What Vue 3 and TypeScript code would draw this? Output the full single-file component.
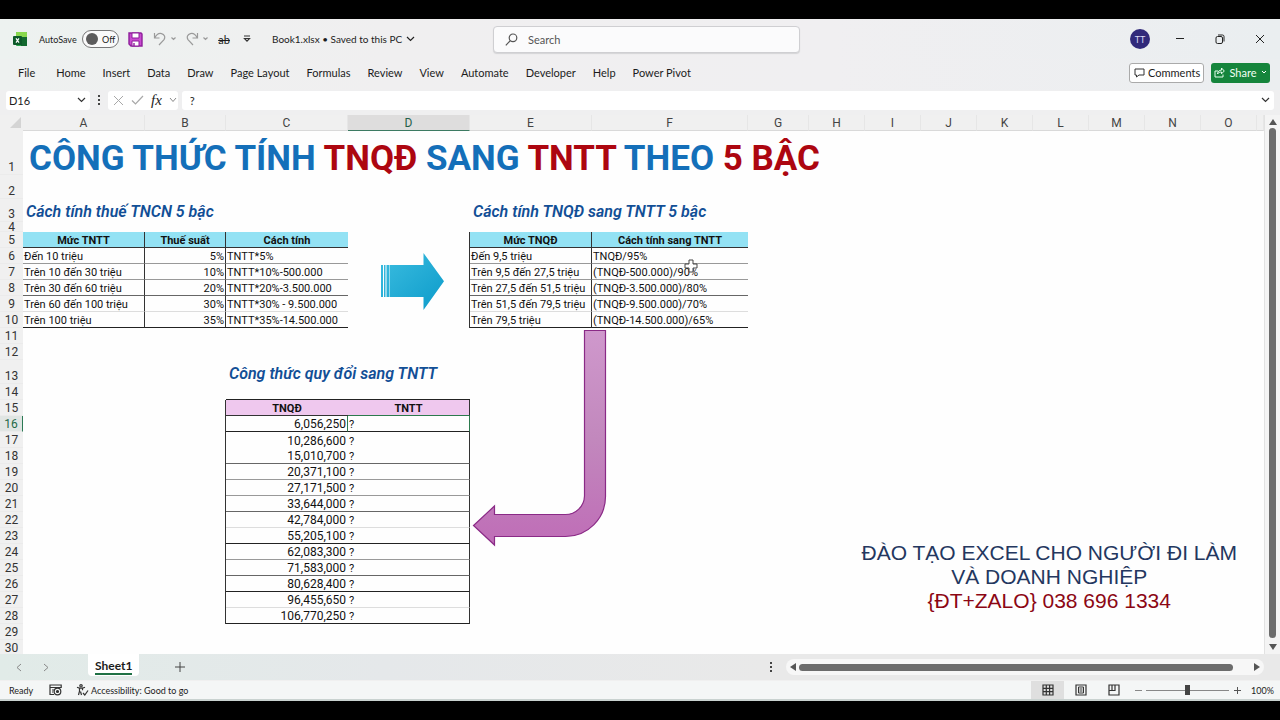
<script setup lang="ts">
import { ref } from 'vue'

interface Run { text: string; tone?: string }
interface Cell { runs: Run[]; cls: string }
interface Row { n: number; size: string; cells: Record<string, Cell> }

const columns = ['A', 'B', 'C', 'D', 'E', 'F', 'G', 'H', 'I', 'J', 'K', 'L', 'M', 'N', 'O']
const menus = ['File', 'Home', 'Insert', 'Data', 'Draw', 'Page Layout', 'Formulas', 'Review', 'View', 'Automate', 'Developer', 'Help', 'Power Pivot']

const cell = (text: string, cls: string): Cell => ({ runs: [{ text }], cls })

const sizes: Record<number, string> = { 1: 'banner', 2: 'tall', 3: 'heading', 4: 'slim', 12: 'short', 13: 'section' }
const rows: Row[] = Array.from({ length: 30 }, (_, i) => ({ n: i + 1, size: sizes[i + 1] ?? 'plain', cells: {} }))
const at = (n: number) => rows[n - 1].cells

at(1).A = {
  cls: 'title',
  runs: [
    { text: 'CÔNG THỨC TÍNH ' },
    { text: 'TNQĐ ', tone: 'red' },
    { text: 'SANG ' },
    { text: 'TNTT ', tone: 'red' },
    { text: 'THEO ' },
    { text: '5 BẬC', tone: 'red' },
  ],
}
at(3).A = cell('Cách tính thuế TNCN 5 bậc', 'sub')
at(3).E = cell('Cách tính TNQĐ sang TNTT 5 bậc', 'sub')
at(13).C = cell('Công thức quy đổi sang TNTT', 'sub')

at(5).A = cell('Mức TNTT', 'head cyan edge')
at(5).B = cell('Thuế suất', 'head cyan edge')
at(5).C = cell('Cách tính', 'head cyan')
at(5).D = cell('', 'edge')
at(5).E = cell('Mức TNQĐ', 'head cyan edge')
at(5).F = cell('Cách tính sang TNTT', 'head cyan')

const brackets = [
  ['Đến 10 triệu', '5%', 'TNTT*5%', 'Đến 9,5 triệu', 'TNQĐ/95%', 'mid'],
  ['Trên 10 đến 30 triệu', '10%', 'TNTT*10%-500.000', 'Trên 9,5 đến 27,5 triệu', '(TNQĐ-500.000)/90%', 'mid'],
  ['Trên 30 đến 60 triệu', '20%', 'TNTT*20%-3.500.000', 'Trên 27,5 đến 51,5 triệu', '(TNQĐ-3.500.000)/80%', 'deep'],
  ['Trên 60 đến 100 triệu', '30%', 'TNTT*30% - 9.500.000', 'Trên 51,5 đến 79,5 triệu', '(TNQĐ-9.500.000)/70%', 'soft'],
  ['Trên 100 triệu', '35%', 'TNTT*35%-14.500.000', 'Trên 79,5 triệu', '(TNQĐ-14.500.000)/65%', 'strong'],
]
brackets.forEach(([range, rate, formula, gross, back, line], i) => {
  const r = at(6 + i)
  r.A = cell(range, `edge ${line}`)
  r.B = cell(rate, `num edge ${line}`)
  r.C = cell(formula, line)
  r.D = cell('', 'edge')
  r.E = cell(gross, `edge ${line}`)
  r.F = cell(back, line)
})

at(14).C = cell('', 'strong')
at(14).D = cell('', 'strong')
at(15).B = cell('', 'edge')
at(15).C = cell('TNQĐ', 'head pink')
at(15).D = cell('TNTT', 'head pink edge above')

const amounts: [string, string][] = [
  ['6,056,250', 'strong'], ['10,286,600', ''], ['15,010,700', 'deep'], ['20,371,100', 'mid'],
  ['27,171,500', 'mid'], ['33,644,000', 'deep'], ['42,784,000', 'soft'], ['55,205,100', 'strong'],
  ['62,083,300', 'mid'], ['71,583,000', 'deep'], ['80,628,400', 'strong'], ['96,455,650', 'soft'],
  ['106,770,250', 'strong'],
]
amounts.forEach(([value, line], i) => {
  const r = at(16 + i)
  r.B = cell('', 'edge')
  r.C = cell(value, `num amount ${line}${i === 0 ? ' before' : ''}`)
  r.D = cell('?', `edge ${line}${i === 0 ? ' active' : ''}`)
})

const autosave = ref(false)
const address = ref('D16')
const formula = ref('?')
const query = ref('')
const zoom = ref(100)
</script>

<template>
  <div class="screen">
    <div class="app">
      <header class="titlebar">
        <div class="quick">
          <svg class="logo" width="14" height="14" viewBox="0 0 14 14" aria-hidden="true">
            <rect x="3" y="0" width="11" height="14" rx="1" fill="#2aa84a" />
            <path d="M4 0h9a1 1 0 0 1 1 1v4H3V1a1 1 0 0 1 1-1z" fill="#8ad94e" />
            <rect x="8" y="5" width="6" height="9" fill="#12692f" />
            <rect x="0" y="4" width="9" height="9" rx="1" fill="#0d5a2a" />
            <path d="M3 6.300l3 4.400M6 6.300l-3 4.400" stroke="#fff" stroke-width="1.200" />
          </svg>
          <label class="autosave">
            <span class="label">AutoSave</span>
            <span class="switch">
              <input v-model="autosave" type="checkbox" />
              <span class="knob"></span>
              <span class="state">Off</span>
            </span>
          </label>
          <button class="icon save" aria-label="Save">
            <svg width="15" height="15" viewBox="0 0 15 15">
              <path d="M1 1h12l1 1v12H3l-2-2z" fill="#c94bd0" stroke="#8e1f9b" stroke-width="1.400" />
              <path d="M4 1h7v5H4z" fill="#fff" stroke="#8e1f9b" />
              <path d="M4 14V9h7v5z" fill="#fff" stroke="#8e1f9b" />
              <path d="M6 11v3" stroke="#8e1f9b" stroke-width="1.400" />
            </svg>
          </button>
          <button class="icon undo" aria-label="Undo">
            <svg width="23" height="14" viewBox="0 0 23 14" fill="none" stroke="#9a9a9a" stroke-width="1.200">
              <path d="M1.500 1v5h5M1.800 5.800C3.500 2.500 6 1 8.500 1.600c3 .700 4.200 3.800 2.300 6.200L6 13" />
              <path d="M18.500 5.500l2 2 2-2" />
            </svg>
          </button>
          <button class="icon redo" aria-label="Redo">
            <svg width="23" height="14" viewBox="0 0 23 14" fill="none" stroke="#9a9a9a" stroke-width="1.200">
              <path d="M12.500 1v5h-5M12.200 5.800C10.500 2.500 8 1 5.500 1.600c-3 .700-4.200 3.800-2.300 6.200L8 13" />
              <path d="M18.500 5.500l2 2 2-2" />
            </svg>
          </button>
          <button class="icon strike" aria-label="Strikethrough"><s>ab</s></button>
          <button class="icon more" aria-label="Customize Quick Access Toolbar">
            <svg width="8" height="8" viewBox="0 0 8 8" fill="none" stroke="#333" stroke-width="1.200">
              <path d="M1 1h6M1.500 3.500h5L4 6.200z" />
            </svg>
          </button>
          <button class="book">
            <span>Book1.xlsx • Saved to this PC</span>
            <svg width="9" height="6" viewBox="0 0 9 6" fill="none" stroke="#222" stroke-width="1.200"><path d="M1 1l3.500 3.500L8 1" /></svg>
          </button>
        </div>
        <label class="search">
          <svg width="13" height="13" viewBox="0 0 13 13" fill="none" stroke="#555" stroke-width="1.200">
            <circle cx="8" cy="4.800" r="3.800" /><path d="M5.300 7.700L.8 12.300" />
          </svg>
          <input v-model="query" type="text" placeholder="Search" aria-label="Search" />
        </label>
        <div class="window">
          <button class="avatar" aria-label="Account">TT</button>
          <button class="icon wbtn" aria-label="Minimize">
            <svg width="10" height="10" viewBox="0 0 10 10" stroke="#222" fill="none"><path d="M1 4.500h8" /></svg>
          </button>
          <button class="icon wbtn" aria-label="Restore">
            <svg width="10" height="10" viewBox="0 0 10 10" stroke="#222" fill="none">
              <rect x="1" y="2.500" width="6.500" height="7" rx="1.500" /><path d="M3 1h4.500Q9 1 9 2.500V7.500" />
            </svg>
          </button>
          <button class="icon wbtn" aria-label="Close">
            <svg width="10" height="10" viewBox="0 0 10 10" stroke="#222" fill="none"><path d="M1 1l8 8M9 1L1 9" /></svg>
          </button>
        </div>
      </header>

      <nav class="menubar">
        <button v-for="m in menus" :key="m" class="menu">{{ m }}</button>
        <span class="spacer"></span>
        <button class="comments">
          <svg width="11" height="10" viewBox="0 0 11 10" fill="none" stroke="#333"><path d="M1 1h9v6H5L2.500 9V7H1z" /></svg>
          Comments
        </button>
        <button class="share">
          <svg width="11" height="11" viewBox="0 0 11 11" fill="none" stroke="#e8ffee">
            <path d="M4 4H1v6h8V7.500M3.500 7c.2-2.500 1.500-3.800 4-3.900V1l2.800 3-2.800 2.800V5C5.700 5 4.400 5.500 3.500 7z" />
          </svg>
          <span>Share</span>
          <svg width="6" height="5" viewBox="0 0 6 5" fill="none" stroke="#fff"><path d="M1 1l2 2 2-2" /></svg>
        </button>
      </nav>

      <div class="formulabar">
        <div class="namebox">
          <input v-model="address" type="text" aria-label="Name Box" />
          <button class="icon" aria-label="Open Name Box">
            <svg width="9" height="6" viewBox="0 0 9 6" fill="none" stroke="#333" stroke-width="1.200"><path d="M1 1l3.500 3.500L8 1" /></svg>
          </button>
        </div>
        <svg class="dots" width="2" height="10" viewBox="0 0 2 10" fill="#444"><path d="M0 0h2v2H0zM0 4h2v2H0zM0 8h2v2H0z" /></svg>
        <div class="fx">
          <button class="icon" aria-label="Cancel">
            <svg width="11" height="11" viewBox="0 0 11 11" fill="none" stroke="#a8a8a8"><path d="M1 1l9 9M10 1l-9 9" /></svg>
          </button>
          <button class="icon" aria-label="Enter">
            <svg width="13" height="10" viewBox="0 0 13 10" fill="none" stroke="#a8a8a8" stroke-width="1.200"><path d="M1 5.500L4.500 9 12 1" /></svg>
          </button>
          <button class="icon fxname" aria-label="Insert Function"><i>fx</i></button>
          <button class="icon" aria-label="Function list">
            <svg width="8" height="6" viewBox="0 0 8 6" fill="none" stroke="#888"><path d="M1 1l3 3.500L7 1" /></svg>
          </button>
        </div>
        <div class="entry">
          <input v-model="formula" type="text" aria-label="Formula Bar" />
          <button class="icon" aria-label="Expand Formula Bar">
            <svg width="9" height="6" viewBox="0 0 9 6" fill="none" stroke="#333" stroke-width="1.200"><path d="M1 1l3.500 3.500L8 1" /></svg>
          </button>
        </div>
      </div>

      <main class="work">
        <div class="sheet">
          <table>
            <colgroup>
              <col class="c-row" /><col class="c-wide" /><col class="c-rate" /><col class="c-wide" /><col class="c-wide" />
              <col class="c-wide" /><col class="c-calc" /><col class="c-g" />
              <col v-for="k in 8" :key="k" class="c-std" /><col />
            </colgroup>
            <thead>
              <tr>
                <th class="corner">
                  <svg width="11" height="11" viewBox="0 0 11 11" aria-label="Select all"><path d="M11 0v11H0z" fill="#d4d4d4" /></svg>
                </th>
                <th v-for="c in columns" :key="c" scope="col" :class="{ current: c === 'D' }">{{ c }}</th>
                <th class="rest"></th>
              </tr>
            </thead>
            <tbody>
              <tr v-for="r in rows" :key="r.n" :class="r.size">
                <th scope="row" :class="{ current: r.n === 16 }">{{ r.n }}</th>
                <td v-for="c in columns" :key="c" :class="r.cells[c]?.cls">
                  <template v-if="r.cells[c]"><span v-for="(run, i) in r.cells[c].runs" :key="i" :class="run.tone">{{ run.text }}</span></template>
                </td>
                <td></td>
              </tr>
            </tbody>
          </table>

          <svg class="shape blue" width="66" height="62" viewBox="380 251 66 62" aria-label="Right arrow">
            <defs>
              <linearGradient id="blueFill" x1="0" y1="0" x2="1" y2="1">
                <stop offset="0" stop-color="#3cbde0" /><stop offset="1" stop-color="#0c9bca" />
              </linearGradient>
            </defs>
            <path d="M381 265h2v32h-2zM384 265h1.500v32H384zM386.500 265h3v32h-3zM390 265H423.500V253L444 281.300 423.500 310V297H390z" fill="url(#blueFill)" />
          </svg>

          <svg class="shape purple" width="140" height="222" viewBox="470 328 140 222" aria-label="Bent arrow">
            <defs>
              <linearGradient id="purpleFill" x1="0" y1="0" x2="0" y2="1">
                <stop offset="0" stop-color="#cf98cc" /><stop offset=".5" stop-color="#c288bd" /><stop offset="1" stop-color="#bf6db7" />
              </linearGradient>
            </defs>
            <path d="M584.500 330.500H605.500V496A40 40 0 0 1 565.500 536.500H494.500V545L473.500 525.500 494.500 506V514.500H565.500A19 19 0 0 0 584.500 496z" fill="url(#purpleFill)" stroke="#8a2a86" stroke-width="1.200" />
          </svg>

          <svg class="shape pointer" width="14" height="14" viewBox="0 0 14 14" aria-hidden="true">
            <path d="M5 1h4v4h4v4H9v4H5V9H1V5h4z" fill="#fff" stroke="#444" />
          </svg>

          <div class="contact">
            <p>ĐÀO TẠO EXCEL CHO NGƯỜI ĐI LÀM</p>
            <p>VÀ DOANH NGHIỆP</p>
            <p class="phone">{ĐT+ZALO} 038 696 1334</p>
          </div>
        </div>
        <div class="vscroll">
          <button class="icon" aria-label="Scroll up"><svg width="8" height="6" viewBox="0 0 8 6"><path d="M4 0l4 6H0z" fill="#555" /></svg></button>
          <div class="vthumb"></div>
          <button class="icon" aria-label="Scroll down"><svg width="8" height="6" viewBox="0 0 8 6"><path d="M4 6l4-6H0z" fill="#555" /></svg></button>
        </div>
      </main>

      <div class="tabs">
        <button class="icon step" aria-label="Previous sheet"><svg width="6" height="9" viewBox="0 0 6 9" fill="none" stroke="#888"><path d="M5 1L1 4.500 5 8" /></svg></button>
        <button class="icon step" aria-label="Next sheet"><svg width="6" height="9" viewBox="0 0 6 9" fill="none" stroke="#888"><path d="M1 1l4 3.500L1 8" /></svg></button>
        <button class="tab"><span>Sheet1</span></button>
        <button class="icon add" aria-label="New sheet"><svg width="10" height="10" viewBox="0 0 10 10" stroke="#444"><path d="M5 0v10M0 5h10" /></svg></button>
        <span class="spacer"></span>
        <svg class="dots" width="2" height="10" viewBox="0 0 2 10" fill="#444"><path d="M0 0h2v2H0zM0 4h2v2H0zM0 8h2v2H0z" /></svg>
        <div class="hscroll">
          <button class="icon" aria-label="Scroll left"><svg width="6" height="8" viewBox="0 0 6 8"><path d="M0 4l6-4v8z" fill="#555" /></svg></button>
          <div class="htrack"><div class="hthumb"></div></div>
          <button class="icon" aria-label="Scroll right"><svg width="6" height="8" viewBox="0 0 6 8"><path d="M6 4L0 0v8z" fill="#555" /></svg></button>
        </div>
      </div>

      <footer class="status">
        <span class="ready">Ready</span>
        <button class="icon macro" aria-label="Record macro">
          <svg width="13" height="12" viewBox="0 0 13 12" fill="none" stroke="#333" stroke-width="1.200">
            <path d="M12.200 4V1H1v9.500h4M1 3.500h11M3 6h2M3 8h1.500" /><circle cx="8.500" cy="7.500" r="3.300" /><circle cx="8.500" cy="7.500" r="1" fill="#333" />
          </svg>
        </button>
        <button class="access">
          <svg width="13" height="12" viewBox="0 0 13 12" fill="none" stroke="#333" stroke-width="1.200">
            <circle cx="5" cy="1.800" r="1.200" /><path d="M1 3.200l2.500 1v3L2.500 11M9 3.200l-2.500 1v2M3.500 4.200h3M4.500 7.500L5.500 11M7 9l1.800 2L12 6.500" />
          </svg>
          Accessibility: Good to go
        </button>
        <span class="spacer"></span>
        <button class="icon view on" aria-label="Normal view">
          <svg width="12" height="12" viewBox="0 0 12 12" fill="none" stroke="#333" stroke-width="1.200"><path d="M1 1h10v10H1zM1 4.300h10M1 7.600h10M4.300 1v10M7.600 1v10" /></svg>
        </button>
        <button class="icon view" aria-label="Page layout view">
          <svg width="12" height="12" viewBox="0 0 12 12" fill="none" stroke="#333" stroke-width="1.200"><path d="M1 1h10v10H1z" /><path d="M3.500 3h5v6h-5zM4.500 5h3M4.500 7h3" stroke-width="1" /></svg>
        </button>
        <button class="icon view" aria-label="Page break preview">
          <svg width="12" height="12" viewBox="0 0 12 12" fill="none" stroke="#333" stroke-width="1.200"><path d="M1 1h10v10H1zM4 1v5M7 1v5.500H1" /></svg>
        </button>
        <button class="icon zbtn" aria-label="Zoom out"><svg width="7" height="7" viewBox="0 0 7 7" stroke="#888"><path d="M0 3.500h7" /></svg></button>
        <input v-model="zoom" class="slider" type="range" min="10" max="190" aria-label="Zoom" />
        <button class="icon zbtn" aria-label="Zoom in"><svg width="7" height="7" viewBox="0 0 7 7" stroke="#555"><path d="M0 3.500h7M3.500 0v7" /></svg></button>
        <span class="percent">{{ zoom }}%</span>
      </footer>
    </div>
  </div>
</template>

<style>
body {
  margin: 0;
  background: #000;
}
</style>

<style scoped>
.screen {
  box-sizing: border-box;
  height: 100vh;
  padding: 19px 0;
  background: #000;
  font-family: Lato, "Open Sans", sans-serif;
  font-size: 11px;
  color: #1c1c1c;
}
.screen *,
.screen *::before {
  box-sizing: border-box;
}
.app {
  display: flex;
  flex-direction: column;
  height: 100%;
  background: #efeff0;
}
button,
input {
  margin: 0;
  padding: 0;
  border: 0;
  background: none;
  font: inherit;
  color: inherit;
}
button {
  white-space: nowrap;
}
input {
  min-width: 0;
  outline: none;
}
svg {
  display: block;
  flex: none;
}
.icon {
  display: flex;
  align-items: center;
  justify-content: center;
}
.spacer {
  flex: 1;
}

.titlebar {
  display: grid;
  grid-template-columns: 493fr 307fr 480fr;
  align-items: center;
  flex: none;
  height: 40px;
  background: linear-gradient(90deg, #edf2f0, #f0eff0 30%, #f0eff1 65%, #eaeef0);
}
.quick {
  display: flex;
  align-items: center;
  padding-left: 13px;
}
.autosave {
  display: flex;
  align-items: center;
  margin-left: 12px;
  font-size: 9px;
}
.label {
  width: 43px;
}
.switch {
  position: relative;
  display: flex;
  align-items: center;
  gap: 4px;
  width: 37px;
  height: 18px;
  padding-left: 3px;
  border: 1px solid #777;
  border-radius: 9px;
  background: #fafafa;
}
.switch input {
  position: absolute;
  inset: 0;
  opacity: 0;
}
.knob {
  width: 12px;
  height: 12px;
  border-radius: 50%;
  background: #5c5c5c;
}
.save {
  margin-left: 9px;
}
.undo {
  margin-left: 10px;
}
.redo {
  margin-left: 9px;
}
.strike {
  margin-left: 9px;
  width: 14px;
}
.more {
  margin-left: 12px;
}
.book {
  display: flex;
  align-items: center;
  gap: 4px;
  margin-left: 21px;
  font-size: 10px;
}
.search {
  display: flex;
  align-items: center;
  gap: 10px;
  height: 27px;
  padding: 0 11px;
  border: 1px solid #cfcfd2;
  border-radius: 4px;
  background: #fbfbfc;
  box-shadow: 0 1px 1px #d4d4d6;
}
.search input {
  flex: 1;
}
.search input::placeholder {
  color: #555;
  opacity: 1;
}
.window {
  display: flex;
  align-items: center;
  justify-content: flex-end;
}
.avatar {
  width: 20px;
  height: 20px;
  margin-right: 10px;
  border-radius: 50%;
  background: #31297a;
  color: #dcd8f4;
  font-size: 9px;
}
.wbtn {
  width: 40px;
  height: 32px;
}

.menubar {
  display: flex;
  align-items: center;
  flex: none;
  height: 31px;
  padding: 0 10px 4px 18px;
  background: linear-gradient(90deg, #eef1f0, #f0eff0 30%, #f0eff1 65%, #ebeef0);
}
.menu {
  margin-right: 17px;
}
.menu:first-child {
  margin-right: 21px;
}
.comments,
.share {
  display: flex;
  align-items: center;
  gap: 3px;
  height: 20px;
  border-radius: 3px;
}
.comments {
  width: 75px;
  padding: 0 4px;
  border: 1px solid #aaa;
  background: #fff;
}
.share {
  justify-content: space-between;
  width: 59px;
  margin-left: 7px;
  padding: 0 3px;
  background: #15853c;
  color: #f2fff5;
}

.formulabar {
  display: flex;
  align-items: center;
  flex: none;
  height: 25px;
  padding: 0 6px 5px;
}
.namebox {
  display: flex;
  align-items: center;
  width: 84px;
  height: 19px;
  padding: 0 4px 0 3px;
  border-radius: 3px;
  background: #fff;
}
.namebox input {
  flex: 1;
}
.dots {
  margin: 0 8px;
}
.fx {
  display: flex;
  align-items: center;
  gap: 7px;
  height: 19px;
  padding: 0 1px 0 5px;
  border-radius: 3px;
  background: #fff;
}
.fxname {
  font-family: "Liberation Serif", serif;
  font-size: 15px;
  line-height: 18px;
}
.entry {
  display: flex;
  align-items: center;
  flex: 1;
  height: 19px;
  margin-left: 4px;
  padding: 0 4px 0 8px;
  border-radius: 3px;
  background: #fff;
}
.entry input {
  flex: 1;
}

.work {
  display: flex;
  flex: 1;
  min-height: 0;
}
.sheet {
  position: relative;
  flex: 1;
  min-width: 0;
  overflow: hidden;
  background: #fefefe;
  font-family: Roboto, "Noto Sans", sans-serif;
}
table {
  width: 100%;
  table-layout: fixed;
  border-collapse: separate;
  border-spacing: 0;
}
.c-row { width: 23px; }
.c-wide { width: 122px; }
.c-rate { width: 81px; }
.c-calc { width: 156px; }
.c-g { width: 61px; }
.c-std { width: 56px; }
th,
td {
  height: 16px;
  padding: 1px 1px 0;
  line-height: 14px;
  vertical-align: bottom;
  white-space: nowrap;
  text-align: left;
}
td {
  padding-top: 3px;
  line-height: 12px;
  color: #111;
}
thead th {
  padding: 1px 0 0;
  border-right: 1px solid #e6e6e6;
  border-bottom: 1px solid #d9d9d9;
  background: #f0f0f0;
  font-size: 12px;
  font-weight: 400;
  text-align: center;
  color: #444;
}
thead .current {
  border-bottom: 1px solid #3c7a62;
  background: #dedddd;
  color: #24614a;
}
thead .corner {
  border-right: 0;
  border-bottom-color: #f0f0f0;
}
.corner svg {
  margin: 0 0 2px 10px;
}
tbody th {
  padding: 1px 0 0;
  border-bottom: 1px solid #ebebeb;
  background: #f0f0f0;
  font-size: 12px;
  font-weight: 400;
  text-align: center;
  color: #333;
}
tbody .current {
  border-right: 1px solid #2c7a55;
  background: #e0e5e3;
  color: #1f6a48;
}
.banner th, .banner td { height: 44px; }
.tall th, .tall td { height: 24px; }
.heading th, .heading td { height: 23px; }
.slim th, .slim td {
  height: 10px;
  padding: 0;
  line-height: 9px;
}
.slim th { line-height: 8px; }
.section th, .section td { height: 24px; }

td.title {
  padding-left: 6px;
  font-size: 35px;
  font-weight: 700;
  line-height: 32px;
  color: #146fb9;
  white-space: pre;
}
.red {
  color: #ad0610;
}
td.sub {
  padding-top: 1px;
  padding-left: 3px;
  font-size: 16px;
  font-style: italic;
  font-weight: 600;
  line-height: 20px;
  color: #124f96;
}
.edge { border-right: 1px solid #333; }
.strong { border-bottom: 1px solid #222; }
.deep { border-bottom: 1px solid #666; }
.mid { border-bottom: 1px solid #999; }
.soft { border-bottom: 1px solid #ddd; }
.num { text-align: right; }
.amount {
  padding-top: 1px;
  padding-right: 2px;
  font-size: 12px;
  line-height: 14px;
}
.head {
  border-bottom: 1px solid #333;
  font-weight: 700;
  text-align: center;
}
.cyan { background: #93e2f4; }
.pink { background: #efc8ee; }
.above { border-bottom-color: #2c7a4d; }
.before {
  padding-right: 1px;
  border-right: 1px solid #2c7a4d;
}
.active { border-right-color: #2c7a4d; }

.shape {
  position: absolute;
}
.blue { left: 380px; top: 136px; }
.purple { left: 470px; top: 213px; }
.pointer { left: 684px; top: 144px; }
.contact {
  position: absolute;
  right: 27px;
  bottom: 41px;
  font-family: "Liberation Sans", Arial, sans-serif;
  font-size: 21px;
  line-height: 24px;
  text-align: center;
  color: #24375f;
  white-space: nowrap;
}
.contact p {
  margin: 0;
}
.contact .phone {
  color: #8c0714;
}

.vscroll {
  display: flex;
  flex-direction: column;
  align-items: center;
  gap: 3px;
  width: 16px;
  padding: 4px 0;
  border-left: 1px solid #e2e2e2;
  background: #f4f4f4;
}
.vthumb {
  flex: 1;
  width: 7px;
  margin-bottom: 3px;
  border-radius: 4px;
  background: #6c6c6c;
}

.tabs {
  display: flex;
  align-items: center;
  flex: none;
  height: 26px;
  padding: 0 16px 0 5px;
  background: linear-gradient(90deg, #e1ebe8, #e5e8ea 30%, #e9e9e9 60%);
}
.step {
  width: 27px;
  height: 22px;
}
.tab {
  align-self: flex-start;
  height: 22px;
  margin-left: 29px;
  padding: 0 7px;
  border-radius: 0 0 4px 4px;
  background: #fff;
  font-size: 12px;
  font-weight: 700;
}
.tab span {
  display: block;
  height: 20px;
  border-bottom: 2px solid #1f7145;
  line-height: 21px;
}
.add {
  margin-left: 36px;
}
.tabs .dots {
  margin: 0 14px 0 0;
}
.hscroll {
  display: flex;
  align-items: center;
  gap: 3px;
  width: 38%;
  height: 16px;
  padding: 0 4px;
  border-radius: 8px;
  background: #f7f7f7;
}
.htrack {
  flex: 1;
}
.hthumb {
  width: 96%;
  height: 7px;
  border-radius: 4px;
  background: #6c6c6c;
}

.status {
  display: flex;
  align-items: center;
  flex: none;
  height: 21px;
  padding: 0 7px 0 9px;
  border-top: 1px solid #f0f0f0;
  border-bottom: 2px solid #c9d2d0;
  background: #f4f6f6;
  font-size: 9px;
}
.ready {
  width: 25px;
}
.macro {
  margin-left: 15px;
}
.access {
  display: flex;
  align-items: center;
  gap: 2px;
  margin-left: 14px;
}
.view {
  width: 33px;
  height: 18px;
}
.on {
  background: #dfdfdf;
}
.zbtn {
  width: 9px;
  margin: 0 3px 0 4px;
}
.slider {
  width: 83px;
  height: 12px;
  appearance: none;
  background: linear-gradient(#888, #888) center / 100% 1px no-repeat;
}
.slider::-webkit-slider-thumb {
  appearance: none;
  width: 5px;
  height: 10px;
  background: #444;
}
.percent {
  width: 22px;
  margin-left: 6px;
}
</style>
